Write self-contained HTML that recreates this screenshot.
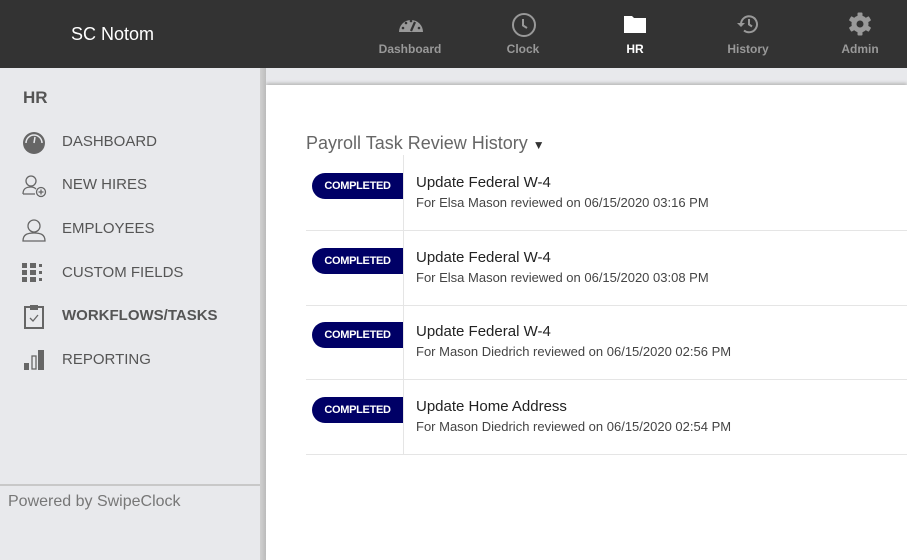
<!DOCTYPE html><html><head><style>
body{margin:0;width:907px;height:560px;overflow:hidden;font-family:"Liberation Sans",sans-serif;background:#e8e9ec;position:relative}
.top{position:absolute;left:0;top:0;width:907px;height:68px;background:#333}
.brand{position:absolute;left:71px;top:24px;color:#fff;font-size:18px}
.nav{position:absolute;top:0;width:100px;text-align:center;color:#999;font-size:12px;font-weight:bold}
.nav svg{position:absolute;top:12px;left:38px}
.nav span{position:absolute;top:42px;left:0;width:100px}
.side{position:absolute;left:0;top:68px;width:260px;height:492px}
.side h3{position:absolute;left:23px;top:20px;margin:0;font-size:17px;color:#555}
.item{position:absolute;left:62px;font-size:15px;color:#555}
.ic{position:absolute;left:22px}
.shadow{position:absolute;left:260px;top:68px;width:6px;height:492px;background:linear-gradient(90deg,#d0d0d0,#bdbdbd)}
.main{position:absolute;left:266px;top:85px;width:641px;height:475px;background:#fff;box-shadow:0 -2px 3px #bbb}
.title{position:absolute;left:306px;top:133px;font-size:18px;color:#666}
.vl{position:absolute;left:403px;top:155px;width:1px;height:299px;background:#e5e5e5}
.hl{position:absolute;left:306px;width:601px;height:1px;background:#e5e5e5}
.badge{position:absolute;left:312px;width:91px;height:26px;background:#000066;border-radius:13px 0 0 13px;color:#fff;font-size:11px;font-weight:bold;line-height:26px;text-align:center;letter-spacing:-.3px}
.t1{position:absolute;left:416px;font-size:15px;color:#222}
.t2{position:absolute;left:416px;font-size:13px;color:#444}
</style></head><body>
<div class="top">
<div class="brand">SC Notom</div>
<div class="nav" style="left:360px"><svg width="26" height="24" viewBox="0 0 26 24"><path d="M1 20A12 12 0 0 1 25 20Z" fill="#999"/><path d="M13 19L17 10" stroke="#333" stroke-width="2.2"/><circle cx="5" cy="16" r="1.3" fill="#333"/><circle cx="8" cy="11" r="1.3" fill="#333"/><circle cx="13" cy="9" r="1.3" fill="#333"/><circle cx="21" cy="16" r="1.3" fill="#333"/></svg><span>Dashboard</span></div>
<div class="nav" style="left:473px"><svg width="26" height="26" viewBox="0 0 26 26"><circle cx="13" cy="13" r="11" fill="none" stroke="#999" stroke-width="2"/><path d="M12 7V13.5L16 16" fill="none" stroke="#999" stroke-width="2"/></svg><span>Clock</span></div>
<div class="nav" style="left:585px;color:#fff"><svg width="24" height="24" viewBox="0 0 24 24"><path d="M1 4H9L11 6H23V21H1Z" fill="#fff"/></svg><span>HR</span></div>
<div class="nav" style="left:698px"><svg width="24" height="24" viewBox="0 0 24 24"><path d="M5 12A8 8 0 1 1 8 18.5" fill="none" stroke="#999" stroke-width="2"/><path d="M1 11L5 15L9 11Z" fill="#999"/><path d="M13 7V12.5L16 14.5" fill="none" stroke="#999" stroke-width="2"/></svg><span>History</span></div>
<div class="nav" style="left:810px"><svg width="24" height="24" viewBox="0 0 24 24"><g fill="#999"><rect x="9.5" y="0.5" width="5" height="23" rx="1"/><rect x="9.5" y="0.5" width="5" height="23" rx="1" transform="rotate(60 12 12)"/><rect x="9.5" y="0.5" width="5" height="23" rx="1" transform="rotate(120 12 12)"/><circle cx="12" cy="12" r="8.5"/></g><circle cx="12" cy="12" r="3.5" fill="#333"/></svg><span>Admin</span></div>
</div>
<div class="side">
<h3>HR</h3>
<svg class="ic" style="top:64px" width="24" height="22" viewBox="0 0 24 22"><circle cx="12" cy="11" r="11" fill="#666"/><path d="M4 11A8 8 0 0 1 20 11" fill="none" stroke="#e8e9ec" stroke-width="1.5"/><path d="M12 11L13 5" stroke="#e8e9ec" stroke-width="1.5"/></svg>
<div class="item" style="top:65px">DASHBOARD</div>
<svg class="ic" style="top:106px" width="26" height="24" viewBox="0 0 26 24"><circle cx="9" cy="7" r="5" fill="none" stroke="#666" stroke-width="1.3"/><path d="M1 20C1 14 5 13 9 13C11 13 13 14 14 15M1 20H13" fill="none" stroke="#666" stroke-width="1.3"/><circle cx="19" cy="18" r="4.5" fill="none" stroke="#666" stroke-width="1.3"/><path d="M19 15.5V20.5M16.5 18H21.5" stroke="#666" stroke-width="1.3"/></svg>
<div class="item" style="top:108px">NEW HIRES</div>
<svg class="ic" style="top:150px" width="24" height="24" viewBox="0 0 24 24"><circle cx="12" cy="8" r="6" fill="none" stroke="#666" stroke-width="1.3"/><path d="M1 23C1 16 6 15 12 15C18 15 23 16 23 23Z" fill="none" stroke="#666" stroke-width="1.3"/></svg>
<div class="item" style="top:152px">EMPLOYEES</div>
<svg class="ic" style="top:195px" width="24" height="20" viewBox="0 0 24 20"><g fill="#666"><rect x="0" y="0" width="5" height="5"/><rect x="8" y="0" width="6" height="5"/><rect x="17" y="1" width="3" height="3"/><rect x="0" y="7" width="5" height="5"/><rect x="8" y="7" width="6" height="5"/><rect x="17" y="8" width="3" height="3"/><rect x="0" y="14" width="5" height="5"/><rect x="8" y="14" width="6" height="5"/><rect x="17" y="15" width="3" height="3"/></g></svg>
<div class="item" style="top:196px">CUSTOM FIELDS</div>
<svg class="ic" style="top:236px" width="24" height="26" viewBox="0 0 24 26"><path d="M3 3H21V24H3Z" fill="none" stroke="#666" stroke-width="2"/><rect x="8" y="1" width="8" height="5" fill="#666"/><path d="M8 14L11 17L16 11" fill="none" stroke="#666" stroke-width="1.3"/></svg>
<div class="item" style="top:239px;font-weight:bold">WORKFLOWS/TASKS</div>
<svg class="ic" style="top:281px" width="24" height="22" viewBox="0 0 24 22"><rect x="2" y="14" width="5" height="7" fill="#666"/><rect x="10" y="7" width="4" height="13" fill="none" stroke="#666" stroke-width="1.3"/><rect x="16" y="1" width="6" height="20" fill="#666"/></svg>
<div class="item" style="top:283px">REPORTING</div>
<div style="position:absolute;left:0;top:416px;width:260px;height:2px;background:#c8c8c8"></div>
<div style="position:absolute;left:8px;top:425px;font-size:16px;color:#777">Powered by SwipeClock</div>
</div>
<div class="shadow"></div>
<div class="main"></div>
<div class="title">Payroll Task Review History <span style="font-size:12px;color:#333">▼</span></div>
<div class="vl"></div>
<div class="badge" style="top:173px">COMPLETED</div><div class="t1" style="top:174px">Update Federal W-4</div><div class="t2" style="top:195px">For Elsa Mason reviewed on 06/15/2020 03:16 PM</div><div class="hl" style="top:230px"></div>
<div class="badge" style="top:248px">COMPLETED</div><div class="t1" style="top:249px">Update Federal W-4</div><div class="t2" style="top:270px">For Elsa Mason reviewed on 06/15/2020 03:08 PM</div><div class="hl" style="top:305px"></div>
<div class="badge" style="top:322px">COMPLETED</div><div class="t1" style="top:323px">Update Federal W-4</div><div class="t2" style="top:344px">For Mason Diedrich reviewed on 06/15/2020 02:56 PM</div><div class="hl" style="top:379px"></div>
<div class="badge" style="top:397px">COMPLETED</div><div class="t1" style="top:398px">Update Home Address</div><div class="t2" style="top:419px">For Mason Diedrich reviewed on 06/15/2020 02:54 PM</div><div class="hl" style="top:454px"></div>
</body></html>
